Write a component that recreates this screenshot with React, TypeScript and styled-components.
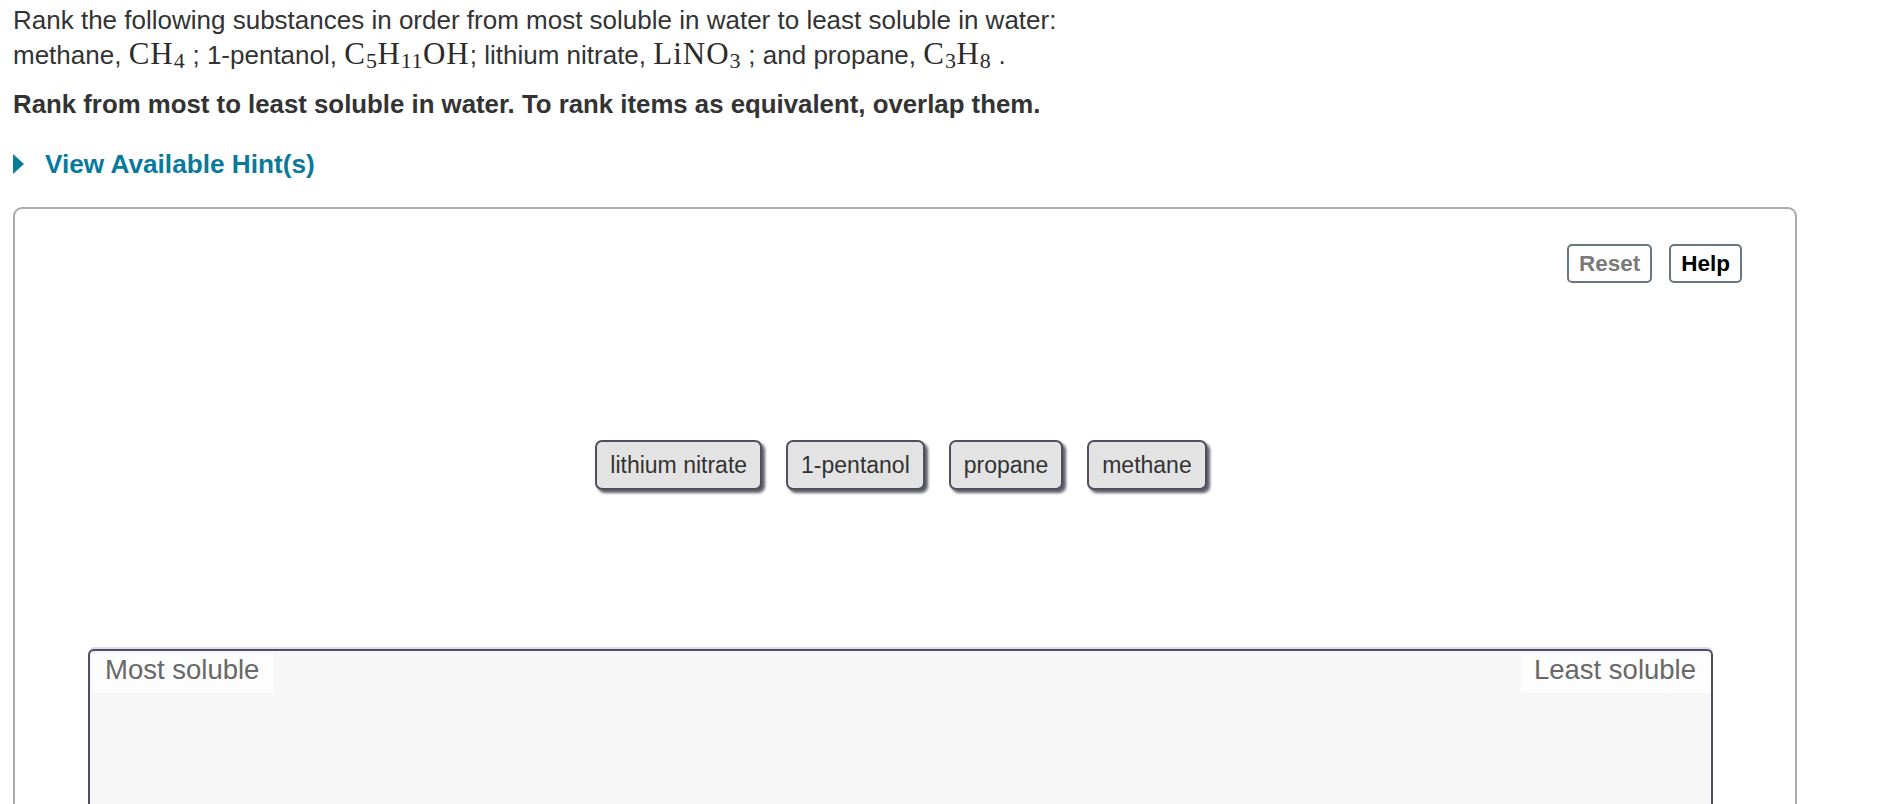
import React from 'react';
import styled, { createGlobalStyle } from 'styled-components';

const GlobalStyle = createGlobalStyle`
  html, body {
    margin: 0;
    padding: 0;
    background: #ffffff;
  }

  body {
    font-family: "Liberation Sans", Arial, Helvetica, sans-serif;
    color: #333333;
    overflow: hidden;
  }
`;

const Page = styled.div`
  padding: 3px 81px 0 13px;
`;

const Question = styled.p`
  margin: 0;
  font-size: 26px;
  line-height: 35px;
`;

const Instruction = styled.p`
  margin: 13px 0 0;
  font-size: 25.8px;
  line-height: 36px;
  font-weight: bold;
`;

const Math = styled.span`
  font-family: "Liberation Serif", "Times New Roman", serif;
  font-size: 31px;
  line-height: 1;
  letter-spacing: 1px;
  color: #2b2b2b;
`;

const Sub = styled.sub`
  font-size: 22px;
  line-height: 1;
  letter-spacing: 0.5px;
  vertical-align: -4px;
`;

const HintToggle = styled.a`
  display: flex;
  align-items: center;
  gap: 21px;
  margin-top: 24px;
  height: 36px;
  font-size: 26.2px;
  font-weight: bold;
  color: #087a9c;
  text-decoration: none;
  cursor: pointer;
`;

const Caret = styled.span`
  display: block;
  width: 0;
  height: 0;
  border-top: 10px solid transparent;
  border-bottom: 10px solid transparent;
  border-left: 11px solid #087a9c;
`;

const Panel = styled.section`
  margin-top: 25px;
  height: 640px;
  box-sizing: border-box;
  border: 2px solid #acacac;
  border-radius: 9px;
  padding-top: 35px;
`;

const Toolbar = styled.div`
  display: flex;
  justify-content: flex-end;
  gap: 17px;
  padding-right: 53px;
`;

const ToolButton = styled.button<{ $muted?: boolean }>`
  height: 39px;
  box-sizing: border-box;
  padding: 0 10px;
  border: 2px solid #697880;
  border-radius: 5px;
  background: #ffffff;
  font-family: "Liberation Sans", Arial, Helvetica, sans-serif;
  font-size: 22.5px;
  font-weight: bold;
  color: ${(p) => (p.$muted ? '#7a7a7a' : '#000000')};
  cursor: pointer;
`;

const Pool = styled.div`
  display: flex;
  justify-content: center;
  gap: 24px;
  margin-top: 157px;
  padding-right: 8px;
`;

const Chip = styled.div`
  height: 50px;
  box-sizing: border-box;
  padding: 0 13px;
  display: flex;
  align-items: center;
  border: 2px solid #4f4f5e;
  border-radius: 7px;
  background: #e3e3e3;
  box-shadow: 3px 3px 3px rgba(40, 40, 55, 0.75);
  font-size: 23px;
  color: #333333;
  cursor: grab;
`;

const RankBox = styled.div`
  margin: 159px 82px 0 73px;
  height: 300px;
  border: 2px solid #4e4e60;
  border-bottom: none;
  border-radius: 6px 6px 0 0;
  box-shadow: 0 -2px 0 #dcdcf4;
  background: #f7f7f7;
`;

const RankLabels = styled.div`
  display: flex;
  justify-content: space-between;
  padding: 2px 0 0 2px;
`;

const RankLabel = styled.span`
  height: 40px;
  box-sizing: border-box;
  padding: 1px 15px 0 13px;
  line-height: 32px;
  background: #fdfdfd;
  font-size: 27.5px;
  color: #686868;
`;

const items = ['lithium nitrate', '1-pentanol', 'propane', 'methane'];

const App = () => {
  return (
    <>
      <GlobalStyle />
      <Page>
        <Question>
          Rank the following substances in order from most soluble in water to least soluble in water:
          <br />
          methane, <Math>CH<Sub>4</Sub></Math> ; 1-pentanol, <Math>C<Sub>5</Sub>H<Sub>11</Sub>OH</Math>; lithium
          nitrate, <Math>LiNO<Sub>3</Sub></Math> ; and propane, <Math>C<Sub>3</Sub>H<Sub>8</Sub></Math> .
        </Question>
        <Instruction>Rank from most to least soluble in water. To rank items as equivalent, overlap them.</Instruction>
        <HintToggle>
          <Caret />
          View Available Hint(s)
        </HintToggle>
        <Panel>
          <Toolbar>
            <ToolButton $muted>Reset</ToolButton>
            <ToolButton>Help</ToolButton>
          </Toolbar>
          <Pool>
            {items.map((item) => (
              <Chip key={item}>{item}</Chip>
            ))}
          </Pool>
          <RankBox>
            <RankLabels>
              <RankLabel>Most soluble</RankLabel>
              <RankLabel>Least soluble</RankLabel>
            </RankLabels>
          </RankBox>
        </Panel>
      </Page>
    </>
  );
};

export default App;
